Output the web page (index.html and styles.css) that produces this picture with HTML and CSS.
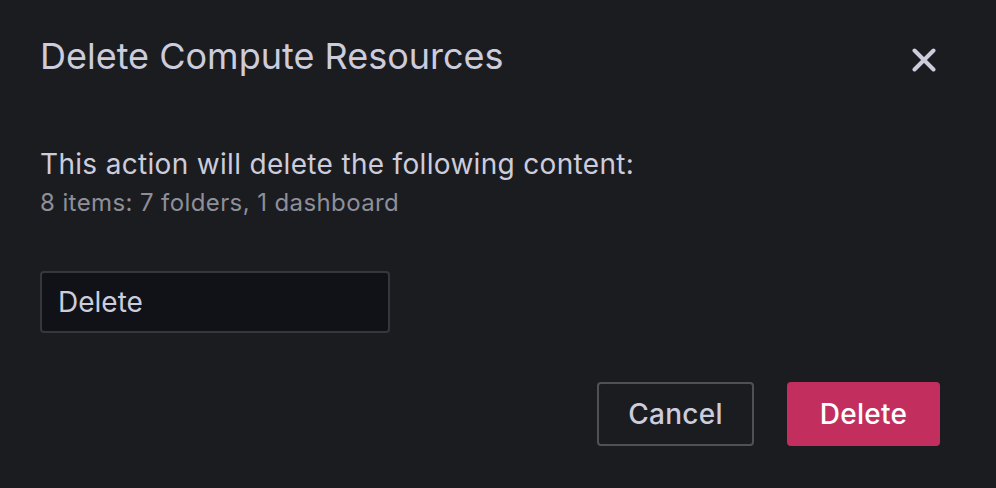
FILE: index.html
```html
<!DOCTYPE html>
<html>
<head>
<meta charset="utf-8">
<link rel="stylesheet" href="styles.css">
</head>
<body>
<div class="modal">
  <div class="header">
    <h2 class="title">Delete Compute Resources</h2>
    <button class="close" aria-label="Close">
      <svg width="24" height="24" viewBox="0 0 24 24"><path d="M2.5 2.5 L21.5 21.5 M21.5 2.5 L2.5 21.5" stroke="#ccccdc" stroke-width="4" stroke-linecap="round" fill="none"/></svg>
    </button>
  </div>
  <div class="body">
    <p class="lead">This action will delete the following content:</p>
    <p class="sub">8 items: 7 folders, 1 dashboard</p>
    <input class="field" type="text" value="Delete">
  </div>
  <div class="footer">
    <button class="btn btn-secondary">Cancel</button>
    <button class="btn btn-danger">Delete</button>
  </div>
</div>
</body>
</html>
```
FILE: styles.css
```css
html, body {
  margin: 0;
  padding: 0;
  background: #1b1c20;
  width: 996px;
  height: 488px;
  overflow: hidden;
}
body {
  font-family: Inter, "Noto Sans", sans-serif;
  color: #ccccdc;
}
.modal {
  padding: 34px 56px 0 40px;
}
.header {
  display: flex;
  align-items: center;
  justify-content: space-between;
  height: 44px;
}
.title {
  margin: 0;
  font-size: 36px;
  line-height: 44px;
  font-weight: 400;
  color: #ccccdc;
}
.close {
  background: none;
  border: none;
  padding: 0;
  width: 24px;
  height: 24px;
  margin-right: 4px;
  margin-top: 8px;
  display: flex;
}
.body {
  padding-top: 66px;
}
.lead {
  margin: 0;
  font-size: 28px;
  line-height: 40px;
  letter-spacing: 0.32px;
}
.sub {
  margin: 3px 0 0;
  font-size: 24px;
  line-height: 32px;
  letter-spacing: 0.4px;
  color: #8e8f99;
}
.field {
  display: block;
  box-sizing: border-box;
  margin-top: 52px;
  width: 350px;
  height: 62px;
  background: #111217;
  border: 2px solid #36373d;
  border-radius: 4px;
  color: #ccccdc;
  font-family: Inter, "Noto Sans", sans-serif;
  font-size: 28px;
  padding: 0 16px;
  outline: none;
}
.footer {
  display: flex;
  justify-content: flex-end;
  gap: 33px;
  margin-top: 49px;
}
.btn {
  box-sizing: border-box;
  height: 64px;
  font-family: Inter, "Noto Sans", sans-serif;
  font-size: 28px;
  font-weight: 500;
  letter-spacing: 0.3px;
  border-radius: 4px;
  padding: 0;
}
.btn-secondary {
  width: 157px;
  background: transparent;
  border: 2px solid #505157;
  color: #ccccdc;
}
.btn-danger {
  width: 153px;
  background: #c22f5f;
  border: none;
  color: #ffffff;
}
```
